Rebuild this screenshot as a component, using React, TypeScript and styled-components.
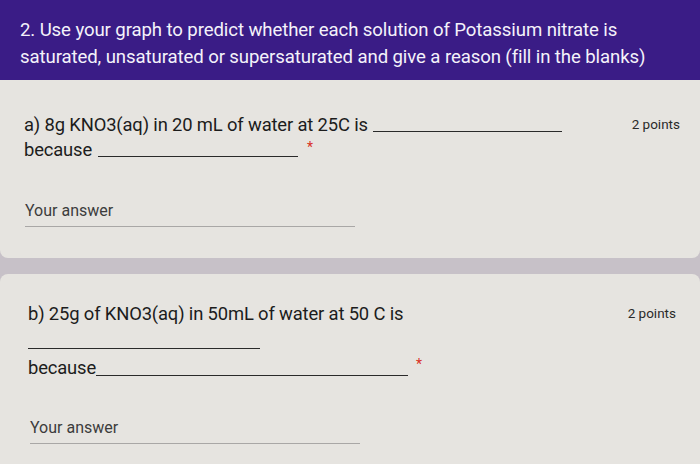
import React from "react";
import styled, { createGlobalStyle } from "styled-components";

const Global = createGlobalStyle`
  html, body { margin: 0; padding: 0; background: #c7c1c8; }
  body { font-family: Roboto, "Open Sans", Arial, sans-serif; color: #202124; overflow: hidden; }
`;

const Page = styled.div`
  width: 700px;
  height: 464px;
  display: flex;
  flex-direction: column;
  gap: 16px;
  background: #c7c1c8;
  overflow: hidden;
`;

const TopGroup = styled.div`
  display: flex;
  flex-direction: column;
`;

const Header = styled.div`
  height: 80px;
  box-sizing: border-box;
  background: #3a1c86;
  color: #f4f2fa;
  padding: 17px 20px 0 20px;
  font-size: 18.6px;
  line-height: 27px;
  letter-spacing: -0.1px;
  white-space: nowrap;
`;

const Card = styled.div<{ $left: number; $right: number; $top: number; $height?: number; $round: string }>`
  background: #e6e4e0;
  box-sizing: border-box;
  padding: ${(p) => p.$top}px ${(p) => p.$right}px 0 ${(p) => p.$left}px;
  height: ${(p) => (p.$height ? `${p.$height}px` : "auto")};
  border-radius: ${(p) => p.$round};
  flex: ${(p) => (p.$height ? "none" : "1")};
`;

const QuestionRow = styled.div`
  display: flex;
  justify-content: space-between;
  align-items: flex-start;
`;

const QuestionText = styled.div<{ $lh: number }>`
  font-size: 18.4px;
  line-height: ${(p) => p.$lh}px;
  color: #1c1c1c;
  letter-spacing: -0.15px;
`;

const Line = styled.div<{ $lh?: number }>`
  display: flex;
  align-items: flex-end;
  white-space: nowrap;
  min-height: ${(p) => p.$lh ?? 0}px;
`;

const Blank = styled.span<{ $w: number; $gap?: number }>`
  display: inline-block;
  width: ${(p) => p.$w}px;
  margin-left: ${(p) => p.$gap ?? 0}px;
  border-bottom: 1.5px solid #2a2a2a;
  margin-bottom: 5px;
`;

const Star = styled.span<{ $gap: number }>`
  color: #d93025;
  font-size: 14px;
  margin-left: ${(p) => p.$gap}px;
  align-self: flex-start;
  line-height: 20px;
`;

const Points = styled.div<{ $mt: number }>`
  font-size: 13.5px;
  color: #2a2a2a;
  margin-top: ${(p) => p.$mt}px;
  white-space: nowrap;
`;

const Answer = styled.div<{ $mt: number; $ml: number }>`
  margin-top: ${(p) => p.$mt}px;
  margin-left: ${(p) => p.$ml}px;
  width: 330px;
  font-size: 16px;
  color: #3c3c3c;
  padding-bottom: 6px;
  border-bottom: 1px solid #a9a7a6;
  line-height: 18px;
`;

export default function App() {
  return (
    <>
      <Global />
      <Page>
        <TopGroup>
          <Header>
            2. Use your graph to predict whether each solution of Potassium nitrate is
            <br />
            saturated, unsaturated or supersaturated and give a reason (fill in the blanks)
          </Header>
          <Card $left={24} $right={20} $top={32} $height={178} $round="0 0 8px 8px">
            <QuestionRow>
              <QuestionText $lh={25}>
                <Line>
                  a) 8g KNO3(aq) in 20 mL of water at 25C is
                  <Blank $w={189} $gap={5} />
                </Line>
                <Line>
                  because
                  <Blank $w={200} $gap={6} />
                  <Star $gap={9}>*</Star>
                </Line>
              </QuestionText>
              <Points $mt={4}>2 points</Points>
            </QuestionRow>
            <Answer $mt={40} $ml={1}>Your answer</Answer>
          </Card>
        </TopGroup>
        <Card $left={28} $right={24} $top={26} $round="8px 8px 0 0">
          <QuestionRow>
            <QuestionText $lh={27}>
              <Line>b) 25g of KNO3(aq) in 50mL of water at 50 C is</Line>
              <Line $lh={27}>
                <Blank $w={232} $gap={0} />
              </Line>
              <Line>
                because
                <Blank $w={312} $gap={0} />
                <Star $gap={8}>*</Star>
              </Line>
            </QuestionText>
            <Points $mt={5}>2 points</Points>
          </QuestionRow>
          <Answer $mt={38} $ml={2}>Your answer</Answer>
        </Card>
      </Page>
    </>
  );
}
